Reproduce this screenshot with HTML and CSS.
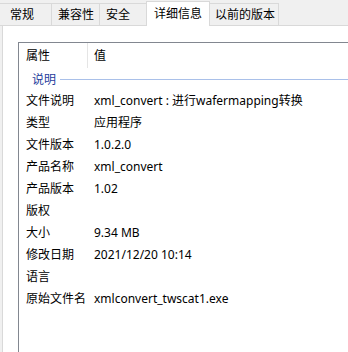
FILE: index.html
```html
<!DOCTYPE html>
<html lang="zh-CN">
<head>
    <meta charset="UTF-8">
    <title>属性 - 详细信息</title>
    <link rel="stylesheet" href="styles.css">
</head>
<body>
    <div class="tabs">
        <div class="tab tab-first">常规</div>
        <div class="tab tab-compat">兼容性</div>
        <div class="tab tab-security">安全</div>
        <div class="tab tab-active">详细信息</div>
        <div class="tab tab-last">以前的版本</div>
        <div class="tab-fill"></div>
    </div>
    <div class="panel">
        <div class="list">
            <div class="list-header">
                <div class="col-name">属性</div>
                <div class="col-value">值</div>
            </div>
            <div class="group">
                <span class="group-title">说明</span>
                <span class="group-line"></span>
            </div>
            <div class="row"><div class="name">文件说明</div><div class="value">xml_convert : 进行wafermapping转换</div></div>
            <div class="row"><div class="name">类型</div><div class="value">应用程序</div></div>
            <div class="row"><div class="name">文件版本</div><div class="value">1.0.2.0</div></div>
            <div class="row"><div class="name">产品名称</div><div class="value">xml_convert</div></div>
            <div class="row"><div class="name">产品版本</div><div class="value">1.02</div></div>
            <div class="row"><div class="name">版权</div><div class="value"></div></div>
            <div class="row"><div class="name">大小</div><div class="value">9.34 MB</div></div>
            <div class="row"><div class="name">修改日期</div><div class="value">2021/12/20 10:14</div></div>
            <div class="row"><div class="name">语言</div><div class="value"></div></div>
            <div class="row"><div class="name">原始文件名</div><div class="value">xmlconvert_twscat1.exe</div></div>
        </div>
    </div>
</body>
</html>
```

FILE: styles.css
```css
body {
    margin: 0;
    background-color: #f0f0f0;
    font-family: "Noto Sans", "Noto Sans CJK SC", sans-serif;
    font-size: 12px;
    color: #000;
    overflow: hidden;
    height: 352px;
}
.tabs {
    display: flex;
    align-items: flex-end;
    height: 26px;
}
.tab {
    box-sizing: border-box;
    height: 23px;
    line-height: 21px;
    background-color: #f0f0f0;
    border-top: 1px solid #d9d9d9;
    border-left: 1px solid #d9d9d9;
    border-bottom: 1px solid #d9d9d9;
    white-space: nowrap;
}
.tab-first {
    width: 51px;
    padding-left: 10px;
    border-left: none;
}
.tab-compat {
    width: 48px;
    padding-left: 6px;
}
.tab-security {
    width: 47px;
    padding-left: 6px;
}
.tab-active {
    width: 64px;
    height: 25px;
    line-height: 23px;
    padding-left: 7px;
    background-color: #fff;
    border-right: 1px solid #d9d9d9;
    border-bottom: none;
}
.tab-last {
    width: 69px;
    padding-left: 5px;
    border-left: none;
    border-right: 1px solid #d9d9d9;
}
.tab-fill {
    flex: 1;
    border-bottom: 1px solid #d9d9d9;
}
.panel {
    box-sizing: border-box;
    margin-left: 2px;
    height: 326px;
    background-color: #fff;
    border-left: 1px solid #d9d9d9;
    padding: 16px 0 0 15px;
    overflow: hidden;
}
.list {
    box-sizing: border-box;
    width: calc(100% + 10px);
    height: calc(100% + 10px);
    border-top: 1px solid #828790;
    border-left: 1px solid #828790;
}
.list-header {
    display: flex;
    height: 25px;
    line-height: 25px;
}
.col-name {
    width: 61px;
    padding-left: 7px;
    border-right: 1px solid #e5e5e5;
}
.col-value {
    padding-left: 6px;
}
.group {
    display: flex;
    align-items: center;
    height: 22px;
    padding-left: 13px;
}
.group-title {
    color: #1e3c9c;
}
.group-line {
    flex: 1;
    margin-left: 4px;
    border-top: 1px solid #a9c0e9;
}
.row {
    display: flex;
    height: 22px;
    line-height: 22px;
    white-space: nowrap;
}
.name {
    width: 62px;
    padding-left: 7px;
}
.value {
    padding-left: 6px;
}
```
